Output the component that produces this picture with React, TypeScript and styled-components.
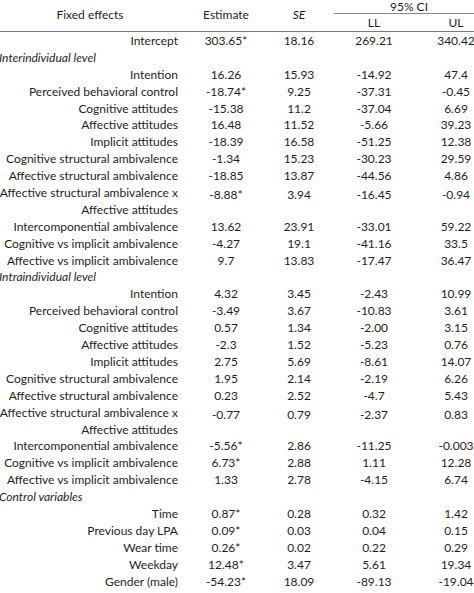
import React from "react";
import styled, { createGlobalStyle } from "styled-components";

type Row =
  | { kind: "group"; label: string }
  | {
      kind: "effect";
      label: string;
      label2?: string;
      est: string;
      se: string;
      ll: string;
      ul: string;
    };

const GlobalStyle = createGlobalStyle`
  html, body {
    margin: 0;
    padding: 0;
    background: #ffffff;
    overflow: hidden;
  }
  body {
    font-family: Lato, "Open Sans", "Liberation Sans", sans-serif;
    color: #1e1e1e;
  }
`;

const COLS = "184px 88px 58px 92px 72px";
const ROW_H = 16.9;

const Table = styled.div`
  width: 494px;
  margin-left: -2px;
  font-size: 12px;
`;

const Header = styled.div`
  display: grid;
  grid-template-columns: ${COLS};
  grid-template-rows: 14px 17px;
  border-bottom: 1.5px solid #7a7a7a;
`;

const HeadCell = styled.div<{ $col: number; $italic?: boolean }>`
  grid-column: ${({ $col }) => $col};
  grid-row: 1 / span 2;
  display: flex;
  align-items: center;
  justify-content: center;
  padding-bottom: 3px;
  font-style: ${({ $italic }) => ($italic ? "italic" : "normal")};
`;

const CiHead = styled.div`
  grid-column: 4 / span 2;
  grid-row: 1;
  margin-left: 6px;
  border-bottom: 1.5px solid #8a8a8a;
  display: flex;
  align-items: flex-end;
  justify-content: center;
  line-height: 12px;
  padding-right: 8px;
`;

const SubHead = styled.div<{ $col: number }>`
  grid-column: ${({ $col }) => $col};
  grid-row: 2;
  display: flex;
  align-items: center;
  justify-content: center;
  padding-bottom: 1px;
`;

const Body = styled.div`
  display: grid;
  grid-template-columns: ${COLS};
  padding-top: 1px;
`;

const GroupLabel = styled.div`
  grid-column: 1 / -1;
  height: ${ROW_H}px;
  line-height: ${ROW_H}px;
  font-style: italic;
  padding-left: 1px;
  white-space: nowrap;
`;

const Label = styled.div<{ $lines: number }>`
  height: ${({ $lines }) => $lines * ROW_H}px;
  line-height: ${ROW_H}px;
  text-align: right;
  padding-right: 4px;
  white-space: nowrap;
`;

const Value = styled.div<{ $lines: number }>`
  height: ${({ $lines }) => $lines * ROW_H}px;
  line-height: ${ROW_H}px;
  padding-top: ${({ $lines }) => ($lines > 1 ? 2 : 0)}px;
  box-sizing: border-box;
  text-align: center;
  white-space: nowrap;
`;

const rows: Row[] = [
  { kind: "effect", label: "Intercept", est: "303.65*", se: "18.16", ll: "269.21", ul: "340.42" },
  { kind: "group", label: "Interindividual level" },
  { kind: "effect", label: "Intention", est: "16.26", se: "15.93", ll: "-14.92", ul: "47.4" },
  { kind: "effect", label: "Perceived behavioral control", est: "-18.74*", se: "9.25", ll: "-37.31", ul: "-0.45" },
  { kind: "effect", label: "Cognitive attitudes", est: "-15.38", se: "11.2", ll: "-37.04", ul: "6.69" },
  { kind: "effect", label: "Affective attitudes", est: "16.48", se: "11.52", ll: "-5.66", ul: "39.23" },
  { kind: "effect", label: "Implicit attitudes", est: "-18.39", se: "16.58", ll: "-51.25", ul: "12.38" },
  { kind: "effect", label: "Cognitive structural ambivalence", est: "-1.34", se: "15.23", ll: "-30.23", ul: "29.59" },
  { kind: "effect", label: "Affective structural ambivalence", est: "-18.85", se: "13.87", ll: "-44.56", ul: "4.86" },
  { kind: "effect", label: "Affective structural ambivalence x", label2: "Affective attitudes", est: "-8.88*", se: "3.94", ll: "-16.45", ul: "-0.94" },
  { kind: "effect", label: "Intercomponential ambivalence", est: "13.62", se: "23.91", ll: "-33.01", ul: "59.22" },
  { kind: "effect", label: "Cognitive vs implicit ambivalence", est: "-4.27", se: "19.1", ll: "-41.16", ul: "33.5" },
  { kind: "effect", label: "Affective vs implicit ambivalence", est: "9.7", se: "13.83", ll: "-17.47", ul: "36.47" },
  { kind: "group", label: "Intraindividual level" },
  { kind: "effect", label: "Intention", est: "4.32", se: "3.45", ll: "-2.43", ul: "10.99" },
  { kind: "effect", label: "Perceived behavioral control", est: "-3.49", se: "3.67", ll: "-10.83", ul: "3.61" },
  { kind: "effect", label: "Cognitive attitudes", est: "0.57", se: "1.34", ll: "-2.00", ul: "3.15" },
  { kind: "effect", label: "Affective attitudes", est: "-2.3", se: "1.52", ll: "-5.23", ul: "0.76" },
  { kind: "effect", label: "Implicit attitudes", est: "2.75", se: "5.69", ll: "-8.61", ul: "14.07" },
  { kind: "effect", label: "Cognitive structural ambivalence", est: "1.95", se: "2.14", ll: "-2.19", ul: "6.26" },
  { kind: "effect", label: "Affective structural ambivalence", est: "0.23", se: "2.52", ll: "-4.7", ul: "5.43" },
  { kind: "effect", label: "Affective structural ambivalence x", label2: "Affective attitudes", est: "-0.77", se: "0.79", ll: "-2.37", ul: "0.83" },
  { kind: "effect", label: "Intercomponential ambivalence", est: "-5.56*", se: "2.86", ll: "-11.25", ul: "-0.003" },
  { kind: "effect", label: "Cognitive vs implicit ambivalence", est: "6.73*", se: "2.88", ll: "1.11", ul: "12.28" },
  { kind: "effect", label: "Affective vs implicit ambivalence", est: "1.33", se: "2.78", ll: "-4.15", ul: "6.74" },
  { kind: "group", label: "Control variables" },
  { kind: "effect", label: "Time", est: "0.87*", se: "0.28", ll: "0.32", ul: "1.42" },
  { kind: "effect", label: "Previous day LPA", est: "0.09*", se: "0.03", ll: "0.04", ul: "0.15" },
  { kind: "effect", label: "Wear time", est: "0.26*", se: "0.02", ll: "0.22", ul: "0.29" },
  { kind: "effect", label: "Weekday", est: "12.48*", se: "3.47", ll: "5.61", ul: "19.34" },
  { kind: "effect", label: "Gender (male)", est: "-54.23*", se: "18.09", ll: "-89.13", ul: "-19.04" },
];

const App: React.FC = () => {
  return (
    <>
      <GlobalStyle />
      <Table>
        <Header>
          <HeadCell $col={1}>Fixed effects</HeadCell>
          <HeadCell $col={2}>Estimate</HeadCell>
          <HeadCell $col={3} $italic>
            SE
          </HeadCell>
          <CiHead>95% CI</CiHead>
          <SubHead $col={4}>LL</SubHead>
          <SubHead $col={5}>UL</SubHead>
        </Header>
        <Body>
          {rows.map((row, i) => {
            if (row.kind === "group") {
              return <GroupLabel key={i}>{row.label}</GroupLabel>;
            }
            const lines = row.label2 ? 2 : 1;
            return (
              <React.Fragment key={i}>
                <Label $lines={lines}>
                  {row.label}
                  {row.label2 && <br />}
                  {row.label2}
                </Label>
                <Value $lines={lines}>{row.est}</Value>
                <Value $lines={lines}>{row.se}</Value>
                <Value $lines={lines}>{row.ll}</Value>
                <Value $lines={lines}>{row.ul}</Value>
              </React.Fragment>
            );
          })}
        </Body>
      </Table>
    </>
  );
};

export default App;
